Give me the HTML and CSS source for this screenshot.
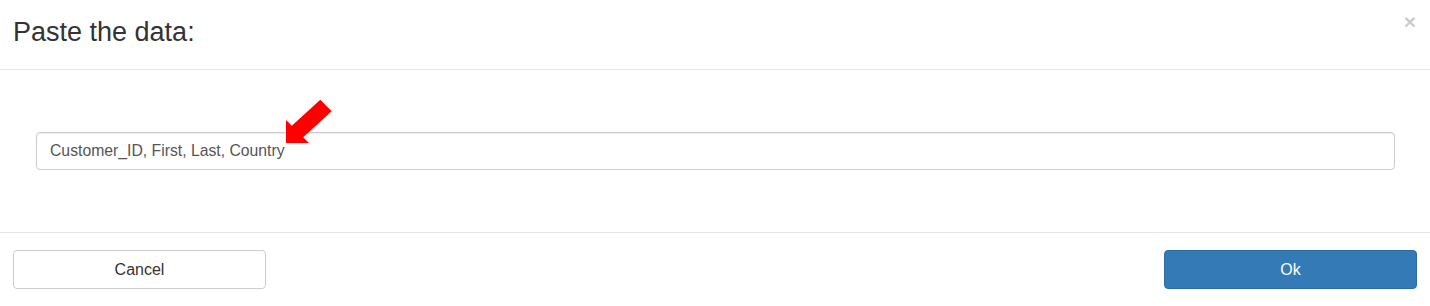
FILE: index.html
```html
<!DOCTYPE html>
<html>
<head>
<meta charset="utf-8">
<link rel="stylesheet" href="styles.css">
</head>
<body>
<div class="modal">
  <div class="modal-header">
    <h4 class="modal-title">Paste the data:</h4>
    <button class="close" type="button">×</button>
  </div>
  <div class="modal-body">
    <input class="form-control" type="text" value="Customer_ID, First, Last, Country">
    <svg class="arrow" width="60" height="55" viewBox="0 0 60 55">
      <polygon points="6,48 6,25 11.8,30.8 40.3,4.8 51.7,16.2 23.2,42.2 29,48" fill="#ff0000"/>
    </svg>
  </div>
  <div class="modal-footer">
    <button class="btn btn-default" type="button">Cancel</button>
    <button class="btn btn-primary" type="button">Ok</button>
  </div>
</div>
</body>
</html>
```
FILE: styles.css
```css
html, body {
  margin: 0;
  padding: 0;
  background: #fff;
}
body {
  font-family: "Liberation Sans", Arial, sans-serif;
  color: #333;
}
.modal {
  width: 1430px;
  background: #fff;
}
.modal-header {
  display: flex;
  justify-content: space-between;
  align-items: flex-start;
  height: 69px;
  box-sizing: content-box;
  padding: 0 14px 0 13px;
  border-bottom: 1px solid #e5e5e5;
}
.modal-title {
  margin: 0;
  padding-top: 13px;
  font-size: 27px;
  line-height: 39px;
  font-weight: normal;
  color: #333;
}
.close {
  margin-top: 8px;
  padding: 0;
  border: 0;
  background: transparent;
  font-family: "Liberation Sans", Arial, sans-serif;
  font-size: 21px;
  font-weight: bold;
  line-height: 27px;
  color: #000;
  opacity: 0.2;
}
.modal-body {
  position: relative;
  padding: 62px 35px 62px 36px;
}
.form-control {
  display: block;
  width: 100%;
  height: 38px;
  box-sizing: border-box;
  padding: 0 12px 0 13px;
  border: 1px solid #ccc;
  border-radius: 4px;
  font-family: "Liberation Sans", Arial, sans-serif;
  font-size: 15.75px;
  color: #555;
  background: #fff;
  box-shadow: inset 0 1px 1px rgba(0,0,0,.075);
  outline: none;
}
.arrow {
  position: absolute;
  left: 280px;
  top: 25px;
}
.modal-footer {
  display: flex;
  justify-content: space-between;
  padding: 17px 13px 0 13px;
  height: 57px;
  border-top: 1px solid #e5e5e5;
}
.btn {
  width: 253px;
  height: 39px;
  box-sizing: border-box;
  border-radius: 4px;
  font-family: "Liberation Sans", Arial, sans-serif;
  font-size: 16px;
  line-height: 20px;
  padding: 0;
}
.btn-default {
  background: #fff;
  border: 1px solid #ccc;
  color: #333;
}
.btn-primary {
  background: #337ab7;
  border: 1px solid #2e6da4;
  color: #fff;
}
```
